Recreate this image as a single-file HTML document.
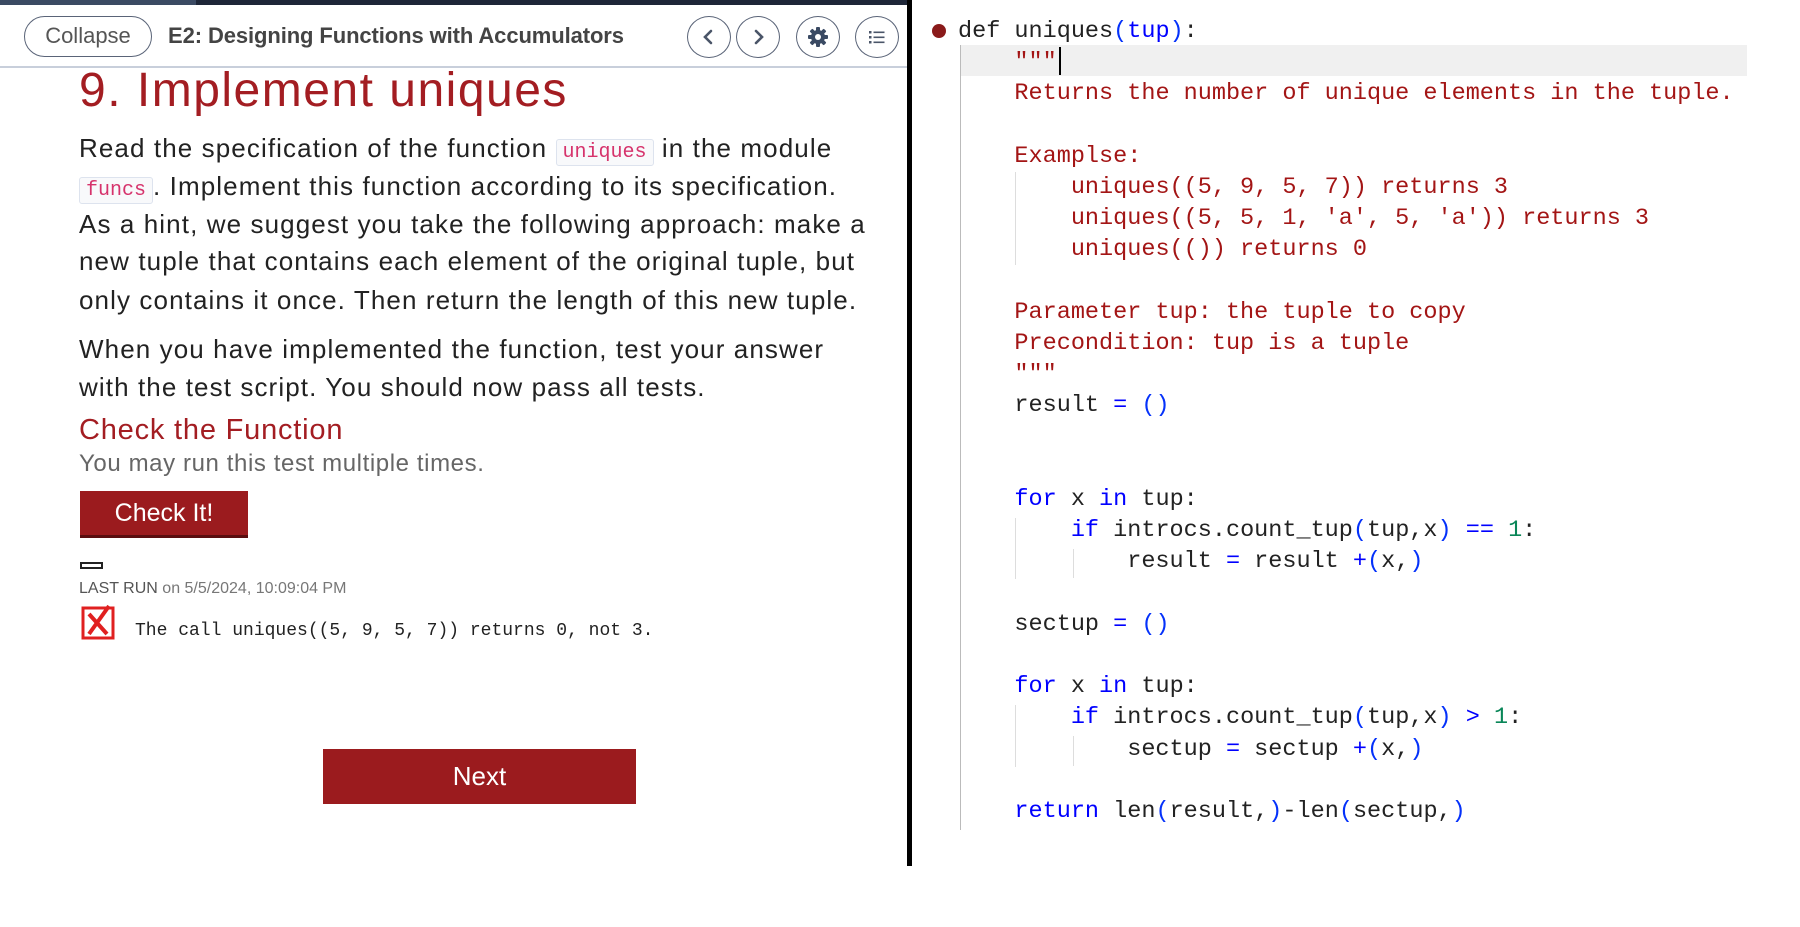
<!DOCTYPE html>
<html><head><meta charset="utf-8"><style>
*{margin:0;padding:0;box-sizing:border-box}
body{width:1800px;height:927px;background:#fff;position:relative;overflow:hidden;font-family:"Liberation Sans",sans-serif}
.a{position:absolute;white-space:nowrap}
.p{font-size:26px;color:#222;left:79px;letter-spacing:1.1px}
.code{font-family:"Liberation Mono",monospace;font-size:23.5px;color:#222}
code.i{font-family:"Liberation Mono",monospace;font-size:20px;color:#d6336c;background:#f8f9fb;border:1px solid #dde3ee;border-radius:3px;padding:1px 6px;letter-spacing:0}
.ds{color:#a31515}.kw{color:#0000ff}.pr{color:#0431fa}.nm{color:#098658}.bl{color:#0000ff}
.circ{position:absolute;top:16px;width:44px;height:42px;border:1.5px solid #5a6478;border-radius:50%;display:flex;align-items:center;justify-content:center}
.vl{position:absolute;width:1px;background:#bbb}
</style></head><body>
<div class="a" style="left:0;top:0;width:196px;height:5px;background:#3b4a63"></div>
<div class="a" style="left:196px;top:0;width:711px;height:5px;background:#1e2638"></div>
<div class="a" style="left:0;top:66px;width:907px;height:2px;background:#c8cfdb"></div>
<div class="a" style="left:907px;top:0;width:5px;height:866px;background:#000"></div>
<div class="a" style="left:24px;top:16px;width:128px;height:41px;border:1.5px solid #5a6478;border-radius:21px;font-size:22px;color:#555;text-align:center;line-height:38px">Collapse</div>
<div class="a" style="left:168px;top:23px;font-size:22px;font-weight:bold;color:#444;letter-spacing:-0.1px">E2: Designing Functions with Accumulators</div>
<div class="circ" style="left:687px"><svg width="20" height="20" viewBox="0 0 20 20"><path d="M12 4 L6 10 L12 16" stroke="#4a5568" stroke-width="2.6" fill="none" stroke-linecap="round"/></svg></div>
<div class="circ" style="left:736px"><svg width="20" height="20" viewBox="0 0 20 20"><path d="M8 4 L14 10 L8 16" stroke="#4a5568" stroke-width="2.6" fill="none" stroke-linecap="round"/></svg></div>
<div class="circ" style="left:796px"><svg width="24" height="24" viewBox="0 0 24 24"><g fill="#3a4a63"><circle cx="12" cy="12" r="7"/><rect x="10" y="2" width="4" height="20" rx="1"/><rect x="2" y="10" width="20" height="4" rx="1"/><rect x="10" y="2" width="4" height="20" rx="1" transform="rotate(45 12 12)"/><rect x="10" y="2" width="4" height="20" rx="1" transform="rotate(-45 12 12)"/></g><circle cx="12" cy="12" r="3" fill="#fff"/></svg></div>
<div class="circ" style="left:855px"><svg width="22" height="20" viewBox="0 0 22 20"><g fill="#4a5568"><rect x="3" y="4" width="2.5" height="2.5"/><rect x="3" y="9" width="2.5" height="2.5"/><rect x="3" y="14" width="2.5" height="2.5"/><rect x="7.5" y="4.5" width="11" height="1.6"/><rect x="7.5" y="9.5" width="11" height="1.6"/><rect x="7.5" y="14.5" width="11" height="1.6"/></g></svg></div>

<div class="a" style="left:79px;top:63px;font-size:48px;color:#a31d22;letter-spacing:1.5px">9. Implement uniques</div>
<div class="a p" style="top:133px">Read the specification of the function <code class="i">uniques</code> in the module</div>
<div class="a p" style="top:171px"><code class="i">funcs</code>. Implement this function according to its specification.</div>
<div class="a p" style="top:209px">As a hint, we suggest you take the following approach: make a</div>
<div class="a p" style="top:246px">new tuple that contains each element of the original tuple, but</div>
<div class="a p" style="top:285px">only contains it once. Then return the length of this new tuple.</div>
<div class="a p" style="top:334px">When you have implemented the function, test your answer</div>
<div class="a p" style="top:372px">with the test script. You should now pass all tests.</div>
<div class="a" style="left:79px;top:414px;font-size:29px;color:#a31d22;letter-spacing:0.8px">Check the Function</div>
<div class="a" style="left:79px;top:450px;font-size:24px;color:#666;letter-spacing:0.6px">You may run this test multiple times.</div>
<div class="a" style="left:80px;top:491px;width:168px;height:47px;background:#9b1b1e;border-bottom:3px solid #5a0d0f;color:#fff;font-size:25px;text-align:center;line-height:45px">Check It!</div>
<div class="a" style="left:80px;top:562px;width:23px;height:7px;border:2px solid #222;background:#fff"></div>
<div class="a" style="left:79px;top:580px;font-size:16px;color:#777"><span style="color:#555">LAST RUN</span> on 5/5/2024, 10:09:04 PM</div>
<svg class="a" style="left:81px;top:602px" width="36" height="38" viewBox="0 0 36 38"><rect x="2" y="6" width="30" height="30" fill="#fff" stroke="#e02020" stroke-width="3"/><path d="M8 12 L26 32 M28 4 L8 32" stroke="#e02020" stroke-width="4"/></svg>
<div class="a" style="left:135px;top:621px;font-family:'Liberation Mono',monospace;font-size:18px;color:#222">The call uniques((5, 9, 5, 7)) returns 0, not 3.</div>
<div class="a" style="left:323px;top:749px;width:313px;height:55px;background:#9b1b1e;color:#fff;font-size:26px;text-align:center;line-height:55px">Next</div>

<!-- code -->
<div class="a" style="left:960px;top:45px;width:787px;height:31px;background:#f0f0f0"></div>
<div class="a" style="left:1059px;top:47px;width:2px;height:28px;background:#000"></div>
<div class="vl" style="left:960px;top:45px;height:785px"></div>
<div class="vl" style="left:1015px;top:172px;height:93px;background:#ddd"></div>
<div class="vl" style="left:1015px;top:518px;height:61px;background:#ddd"></div>
<div class="vl" style="left:1015px;top:705px;height:62px;background:#ddd"></div>
<div class="vl" style="left:1073px;top:549px;height:29px;background:#ddd"></div>
<div class="vl" style="left:1073px;top:736px;height:30px;background:#ddd"></div>
<div class="a" style="left:932px;top:24px;width:14px;height:14px;border-radius:50%;background:#8a1a1a"></div>
<div class="a code" style="left:958px;top:16px;line-height:31.2px"><pre style="font:inherit">def uniques<span class="pr">(</span><span class="bl">tup</span><span class="pr">)</span>:
    <span class="ds">"""</span>
    <span class="ds">Returns the number of unique elements in the tuple.</span>

    <span class="ds">Examplse:</span>
        <span class="ds">uniques((5, 9, 5, 7)) returns 3</span>
        <span class="ds">uniques((5, 5, 1, 'a', 5, 'a')) returns 3</span>
        <span class="ds">uniques(()) returns 0</span>

    <span class="ds">Parameter tup: the tuple to copy</span>
    <span class="ds">Precondition: tup is a tuple</span>
    <span class="ds">"""</span>
    result <span class="bl">=</span> <span class="pr">()</span>


    <span class="kw">for</span> x <span class="kw">in</span> tup:
        <span class="kw">if</span> introcs.count_tup<span class="pr">(</span>tup,x<span class="pr">)</span> <span class="bl">==</span> <span class="nm">1</span>:
            result <span class="bl">=</span> result <span class="bl">+</span><span class="pr">(</span>x,<span class="pr">)</span>

    sectup <span class="bl">=</span> <span class="pr">()</span>

    <span class="kw">for</span> x <span class="kw">in</span> tup:
        <span class="kw">if</span> introcs.count_tup<span class="pr">(</span>tup,x<span class="pr">)</span> <span class="bl">&gt;</span> <span class="nm">1</span>:
            sectup <span class="bl">=</span> sectup <span class="bl">+</span><span class="pr">(</span>x,<span class="pr">)</span>

    <span class="kw">return</span> len<span class="pr">(</span>result,<span class="pr">)</span>-len<span class="pr">(</span>sectup,<span class="pr">)</span></pre></div>
</body></html>
